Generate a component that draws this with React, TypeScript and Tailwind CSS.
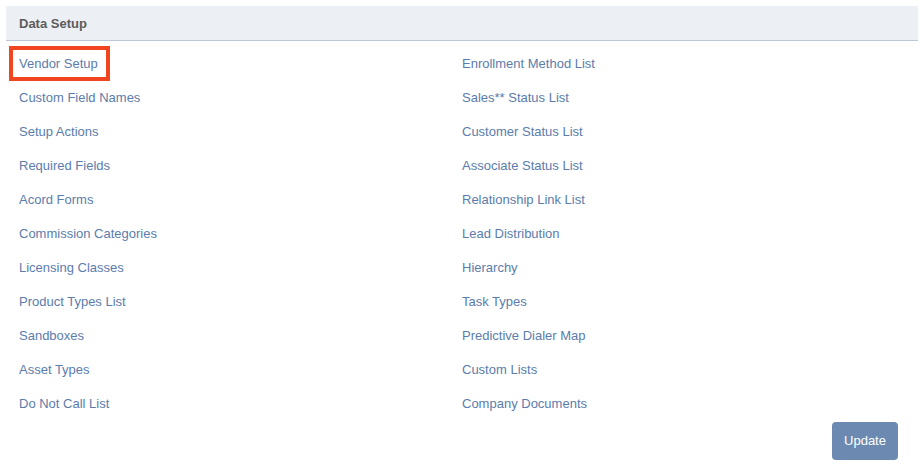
const left = [
  'Vendor Setup',
  'Custom Field Names',
  'Setup Actions',
  'Required Fields',
  'Acord Forms',
  'Commission Categories',
  'Licensing Classes',
  'Product Types List',
  'Sandboxes',
  'Asset Types',
  'Do Not Call List',
];

const right = [
  'Enrollment Method List',
  'Sales** Status List',
  'Customer Status List',
  'Associate Status List',
  'Relationship Link List',
  'Lead Distribution',
  'Hierarchy',
  'Task Types',
  'Predictive Dialer Map',
  'Custom Lists',
  'Company Documents',
];

export default function App() {
  const rows = left.map((l, i) => [l, right[i]]);

  return (
    <div className="w-[922px] h-[466px] bg-white pl-[6px] pt-[6px] font-['Liberation_Sans',Arial,sans-serif]">
      <div className="w-[912px]">
        <div className="h-[35px] bg-[#eceff3] border-b border-[#b8c8d6] flex items-center pl-[13px] pt-[2px] text-[13px] font-bold text-[#5c5c5c]">
          Data Setup
        </div>
        <div className="pt-[6px] grid grid-cols-[443px_1fr]">
          {rows.map(([l, r], i) => (
            <div key={i} className="contents">
              <div className="h-[34px] flex items-center pl-[13px]">
                <a href="#" className="relative text-[13px] text-[#5b7cac] leading-4">
                  {l}
                  {i === 0 && (
                    <span className="absolute -left-[10px] -top-[10px] w-[101px] h-[35px] border-4 border-[#f0451f]" />
                  )}
                </a>
              </div>
              <div className="h-[34px] flex items-center pl-[13px]">
                <a href="#" className="text-[13px] text-[#5b7cac] leading-4">
                  {r}
                </a>
              </div>
            </div>
          ))}
        </div>
        <div className="flex justify-end pr-[20px] pt-[1px]">
          <button className="w-[66px] h-[38px] rounded-[4px] bg-[#6b89b1] text-white text-[13px]">
            Update
          </button>
        </div>
      </div>
    </div>
  );
}
